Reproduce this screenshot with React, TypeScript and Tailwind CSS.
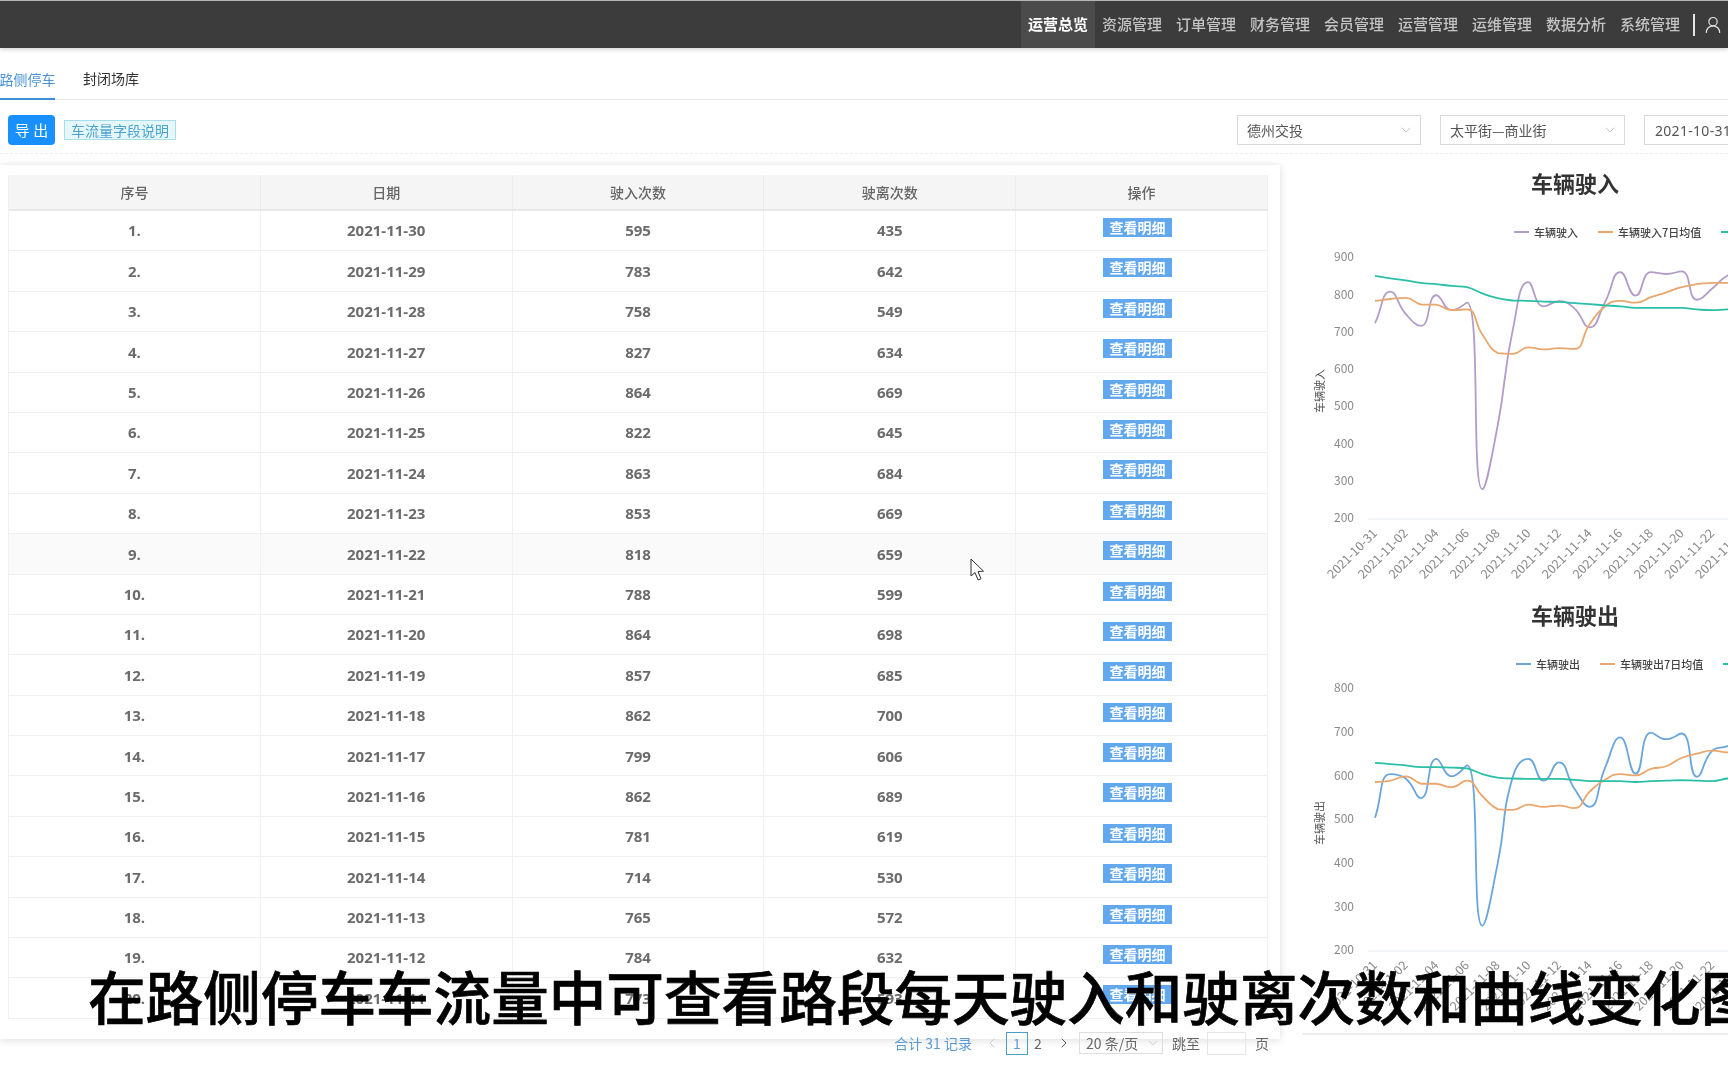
import { UserRound, ChevronDown, ChevronLeft, ChevronRight } from "lucide-react";

const rows: [string, string, number, number][] = [
  ["1.", "2021-11-30", 595, 435],
  ["2.", "2021-11-29", 783, 642],
  ["3.", "2021-11-28", 758, 549],
  ["4.", "2021-11-27", 827, 634],
  ["5.", "2021-11-26", 864, 669],
  ["6.", "2021-11-25", 822, 645],
  ["7.", "2021-11-24", 863, 684],
  ["8.", "2021-11-23", 853, 669],
  ["9.", "2021-11-22", 818, 659],
  ["10.", "2021-11-21", 788, 599],
  ["11.", "2021-11-20", 864, 698],
  ["12.", "2021-11-19", 857, 685],
  ["13.", "2021-11-18", 862, 700],
  ["14.", "2021-11-17", 799, 606],
  ["15.", "2021-11-16", 862, 689],
  ["16.", "2021-11-15", 781, 619],
  ["17.", "2021-11-14", 714, 530],
  ["18.", "2021-11-13", 765, 572],
  ["19.", "2021-11-12", 784, 632],
  ["20.", "2021-11-11", 773, 593],
];

const nav = ["运营总览", "资源管理", "订单管理", "财务管理", "会员管理", "运营管理", "运维管理", "数据分析", "系统管理"];
const heads = ["序号", "日期", "驶入次数", "驶离次数", "操作"];

const inMain = [725, 810, 750, 718, 800, 760, 780, 280, 450, 710, 835, 770, 784, 765, 714, 781, 862, 799, 862, 857, 864, 788, 818, 853, 863];
const inAvg = [785, 790, 793, 775, 775, 760, 762, 695, 645, 643, 660, 655, 658, 656, 722, 770, 785, 780, 795, 808, 822, 830, 833, 833, 838];
const inTrend = [852, 845, 840, 833, 830, 825, 822, 805, 792, 786, 785, 783, 782, 779, 776, 773, 770, 766, 766, 766, 766, 762, 760, 762, 762];
const outMain = [505, 605, 595, 550, 640, 600, 625, 258, 400, 600, 640, 590, 632, 572, 530, 619, 689, 606, 700, 685, 698, 599, 659, 669, 684];
const outAvg = [587, 590, 600, 583, 583, 575, 590, 555, 525, 523, 535, 530, 533, 527, 565, 592, 605, 602, 617, 623, 642, 652, 659, 655, 660];
const outTrend = [631, 628, 625, 621, 621, 620, 618, 605, 597, 595, 594, 594, 594, 592, 589, 589, 589, 587, 589, 590, 591, 590, 589, 595, 596];

const xDates = ["2021-10-31", "2021-11-02", "2021-11-04", "2021-11-06", "2021-11-08", "2021-11-10", "2021-11-12", "2021-11-14", "2021-11-16", "2021-11-18", "2021-11-20", "2021-11-22", "2021-11-24"];

const AXIS = 277;
const px = (i: number) => 95 + 15.33 * i;

/* Same construction as the charting library's smooth lines: control points are
   weighted by the neighbouring segment lengths, then clamped to the neighbours. */
function curve(values: number[], scale: number) {
  const p = values.map((v, i) => [px(i), AXIS - (v - 200) * scale]);
  const s = 0.5;
  const next: number[][] = [];
  const prev: number[][] = [];
  p.forEach((c, i) => {
    const a = p[Math.max(i - 1, 0)];
    const b = p[Math.min(i + 1, p.length - 1)];
    const lp = Math.hypot(c[0] - a[0], c[1] - a[1]);
    const ln = Math.hypot(b[0] - c[0], b[1] - c[1]);
    const r = lp + ln === 0 ? 0.5 : ln / (lp + ln);
    const vx = b[0] - a[0];
    const vy = b[1] - a[1];
    const lo = Math.min(a[1], b[1]);
    const hi = Math.max(a[1], b[1]);
    const clamp = (y: number) => {
      if (i === 0 || i === p.length - 1) return y;
      const mid = c[1] < lo || c[1] > hi;
      return mid ? c[1] : Math.min(hi, Math.max(lo, y));
    };
    next.push([c[0] + vx * s * r, clamp(c[1] + vy * s * r)]);
    prev.push([c[0] - vx * s * (1 - r), clamp(c[1] - vy * s * (1 - r))]);
  });
  let d = `M${p[0][0]} ${p[0][1]}`;
  for (let i = 0; i < p.length - 1; i++) {
    d += ` C${next[i][0]} ${next[i][1]} ${prev[i + 1][0]} ${prev[i + 1][1]} ${p[i + 1][0]} ${p[i + 1][1]}`;
  }
  return d;
}

function Chart(props: {
  title: string;
  legend: string;
  legendLeft: string;
  ticks: number[];
  scale: number;
  main: number[];
  avg: number[];
  trend: number[];
  color: string;
  lineClass: string;
}) {
  const { title, legend, legendLeft, ticks, scale, main, avg, trend, color, lineClass } = props;
  return (
    <div className="h-[432px] w-[448px] shrink-0">
      <div className="flex h-[30px] items-center justify-center pb-[4px] pl-[142px] text-[22px] font-bold text-[#333]">{title}</div>
      <div className={`mt-[23px] flex h-[20px] items-center gap-[20px] overflow-hidden text-[11px] font-medium text-[#444] ${legendLeft}`}>
        <div className="flex shrink-0 items-center gap-[5px]">
          <span className={`h-[2px] w-[15px] ${lineClass}`} />
          <span>{title}</span>
        </div>
        <div className="flex shrink-0 items-center gap-[5px]">
          <span className="h-[2px] w-[15px] bg-[#e9a76d]" />
          <span>{legend}</span>
        </div>
        <div className="flex shrink-0 items-center gap-[5px]">
          <span className="h-[2px] w-[15px] bg-[#2bbfa8]" />
        </div>
      </div>
      <svg width="448" height="359" viewBox="0 0 448 359" className="block">
        <text x="41" y="149" transform="rotate(-90 41 149)" textAnchor="middle" dominantBaseline="middle" fontSize="11" fill="#555">
          {title}
        </text>
        {ticks.map((t) => (
          <text key={t} x="74" y={AXIS - (t - 200) * scale} textAnchor="end" dominantBaseline="middle" fontSize="12" fill="#8a8a8a">
            {t}
          </text>
        ))}
        <line x1="88" y1={AXIS} x2="448" y2={AXIS} stroke="#e6ebf2" strokeWidth="1" />
        {xDates.map((d, i) => {
          const x = px(i * 2) + 3;
          const y = AXIS + 15;
          return (
            <text key={d} x={x} y={y} transform={`rotate(-45 ${x} ${y})`} textAnchor="end" fontSize="12.5" fill="#8a8a8a">
              {d}
            </text>
          );
        })}
        <path d={curve(main, scale)} fill="none" stroke={color} strokeWidth="1.8" />
        <path d={curve(avg, scale)} fill="none" stroke="#e9a76d" strokeWidth="1.8" />
        <path d={curve(trend, scale)} fill="none" stroke="#2bbfa8" strokeWidth="1.8" />
      </svg>
    </div>
  );
}

function Select({ label, width }: { label: string; width: string }) {
  return (
    <div className={`flex h-[30px] shrink-0 items-center justify-between border border-[#d9d9d9] pl-[9px] pr-[6px] text-[14px] text-[#555] ${width}`}>
      <span>{label}</span>
      <ChevronDown size={16} strokeWidth={1} className="text-[#aaa]" />
    </div>
  );
}

export default function App() {
  return (
    <div className="relative h-[1080px] w-[1728px] overflow-hidden bg-white font-['Noto_Sans_CJK_SC','Noto_Sans',sans-serif] blur-[0.4px]">
      {/* top bar */}
      <header className="flex h-12 items-center justify-end border-t border-[#b5b5b5] bg-[#3c3c3c] pr-[5px] shadow-[0_2px_4px_rgba(0,0,0,0.15)]">
        <nav className="flex h-full">
          {nav.map((n, i) => (
            <div
              key={n}
              className={
                i === 0
                  ? "flex w-[74px] items-center justify-center bg-[#4b4b4b] text-[15px] font-bold text-white"
                  : "flex w-[74px] items-center justify-center text-[15px] font-medium text-[#c4c4c4]"
              }
            >
              {n}
            </div>
          ))}
        </nav>
        <span className="ml-[6px] h-[22px] w-[2px] bg-[#e5e5e5]" />
        <UserRound size={20} strokeWidth={1.4} className="ml-[8px] text-[#e5e5e5]" />
      </header>

      {/* tabs */}
      <div className="flex h-[52px] items-end gap-[28px] border-b border-[#e8e8e8]">
        <div className="-mb-px flex h-[36px] w-[55px] items-start justify-center whitespace-nowrap border-b-2 border-[#3f8ed8] pt-[3px] text-[14px] leading-[24px] text-[#4a93d8]">路侧停车</div>
        <div className="flex h-[36px] items-start pt-[3px] text-[14px] leading-[24px] text-[#333]">封闭场库</div>
      </div>

      {/* toolbar */}
      <div className="flex h-[54px] items-start border-b border-dashed border-[#eeeeee] pl-2 pt-[15px]">
        <div className="flex h-[30px] w-[47px] shrink-0 items-center justify-center rounded-sm bg-[#1890ff] text-[15px] text-white">导 出</div>
        <div className="ml-[9px] mt-[5px] flex h-[20px] w-[112px] shrink-0 items-center justify-center border border-[#a6dfe9] bg-[#e6f7fb] text-[14px] text-[#4ba3d0]">车流量字段说明</div>
        <div className="ml-[1061px] flex shrink-0 gap-[19px]">
          <Select label="德州交投" width="w-[184px]" />
          <Select label="太平街—商业街" width="w-[185px]" />
          <div className="flex h-[30px] w-[240px] shrink-0 items-center border border-[#d9d9d9] pl-[10px] font-['Noto_Sans',sans-serif] text-[14px] tracking-[0.3px] text-[#555]">2021-10-31</div>
        </div>
      </div>

      {/* main */}
      <main className="mt-[11px] flex items-start">
        <div className="w-[1280px] shrink-0">
          <section className="h-[874px] pl-2 pt-[10px] shadow-[0_1px_8px_rgba(0,0,0,0.14)]">
            <div className="w-[1260px] border-l border-[#f0f0f0]">
              <div className="grid h-[36px] grid-cols-5 border-b-2 border-[#e8e8e8] bg-[#f5f5f5] text-[14px] font-medium text-[#666]">
                {heads.map((h) => (
                  <div key={h} className="flex items-center justify-center border-r border-[#ececec]">{h}</div>
                ))}
              </div>
              {rows.map((r, i) => (
                <div
                  key={r[0]}
                  className={
                    i === 8
                      ? "grid h-[40.4px] grid-cols-5 border-b border-[#f0f0f0] bg-[#fafafa] font-['Open_Sans',sans-serif] text-[15px] font-bold text-[#6b6b6b]"
                      : "grid h-[40.4px] grid-cols-5 border-b border-[#f0f0f0] font-['Open_Sans',sans-serif] text-[15px] font-bold text-[#6b6b6b]"
                  }
                >
                  <div className="flex items-center justify-center border-r border-[#f0f0f0]">{r[0]}</div>
                  <div className="flex items-center justify-center border-r border-[#f0f0f0]">{r[1]}</div>
                  <div className="flex items-center justify-center border-r border-[#f0f0f0]">{r[2]}</div>
                  <div className="flex items-center justify-center border-r border-[#f0f0f0]">{r[3]}</div>
                  <div className="flex items-start justify-center border-r border-[#f0f0f0] pr-2 pt-[7px]">
                    <span className="flex h-[19px] w-[69px] items-center justify-center bg-[#62a8ee] font-['Noto_Sans_CJK_SC',sans-serif] text-[14px] font-bold text-white">查看明细</span>
                  </div>
                </div>
              ))}
            </div>
          </section>
          {/* pagination */}
          <div className="-mt-[8px] flex h-[24px] items-center justify-end pr-[11px] text-[14px] text-[#666]">
            <span className="text-[#5b9bd5]">合计 31 记录</span>
            <ChevronLeft size={16} strokeWidth={1.5} className="ml-[12px] text-[#ccc]" />
            <span className="ml-[6px] flex h-[23px] w-[22px] items-center justify-center border border-[#4a9dc4] text-[#5b9bd5]">1</span>
            <span className="ml-[6px] w-[8px] text-center">2</span>
            <ChevronRight size={16} strokeWidth={1.5} className="ml-[14px] text-[#555]" />
            <div className="ml-[7px] flex h-[22px] w-[84px] items-center justify-between border border-[#ddd] pl-[6px] pr-[2px]">
              <span>20 条/页</span>
              <ChevronDown size={14} strokeWidth={1} className="text-[#aaa]" />
            </div>
            <span className="ml-[9px]">跳至</span>
            <span className="ml-[7px] h-[23px] w-[39px] border border-[#e5e5e5]" />
            <span className="ml-[9px]">页</span>
          </div>
        </div>

        <div className="mt-[4px] w-[448px] shrink-0 overflow-hidden">
          <Chart
            title="车辆驶入"
            legend="车辆驶入7日均值"
            legendLeft="pl-[234px]"
            ticks={[200, 300, 400, 500, 600, 700, 800, 900]}
            scale={0.3729}
            main={inMain}
            avg={inAvg}
            trend={inTrend}
            color="#b39bc8"
            lineClass="bg-[#b39bc8]"
          />
          <Chart
            title="车辆驶出"
            legend="车辆驶出7日均值"
            legendLeft="pl-[236px]"
            ticks={[200, 300, 400, 500, 600, 700, 800]}
            scale={0.4367}
            main={outMain}
            avg={outAvg}
            trend={outTrend}
            color="#6ba6da"
            lineClass="bg-[#6ba6da]"
          />
          <div className="ml-[22px] h-[2px] bg-[#ececec]" />
        </div>
      </main>

      {/* mouse pointer */}
      <svg width="16" height="24" viewBox="0 0 16 24" className="absolute left-[970px] top-[558px]">
        <path d="M1 1 L1 18 L5 14.5 L8 22 L11 20.8 L8 13.5 L13.5 13.2 Z" fill="#fff" stroke="#333" strokeWidth="1" />
      </svg>

      {/* subtitle */}
      <div className="absolute left-[88px] top-[953px] whitespace-nowrap text-[57.6px] font-medium leading-[84px] text-black [-webkit-text-stroke:0.7px_black]">
        在路侧停车车流量中可查看路段每天驶入和驶离次数和曲线变化图
      </div>
    </div>
  );
}
